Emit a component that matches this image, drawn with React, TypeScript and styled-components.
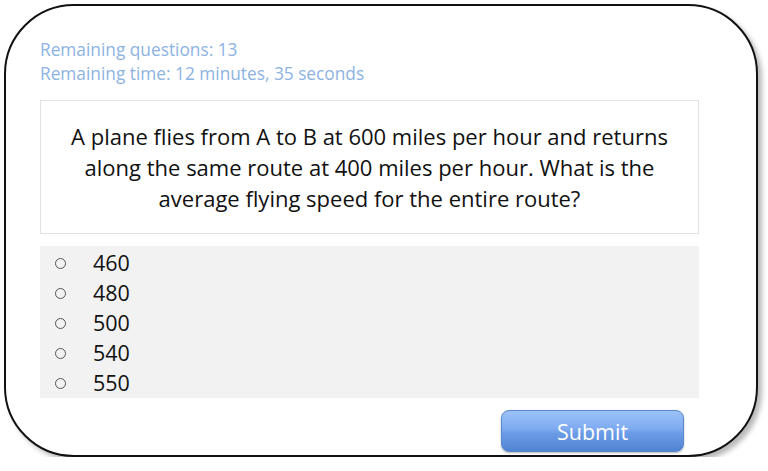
import React from "react";
import styled, { createGlobalStyle } from "styled-components";

const GlobalStyle = createGlobalStyle`
  html, body {
    margin: 0;
    padding: 0;
    background: #fff;
  }
  body {
    font-family: "Open Sans", "Noto Sans", sans-serif;
  }
`;

const Frame = styled.div`
  box-sizing: border-box;
  width: 754px;
  height: 453px;
  margin: 4px 0 0 4px;
  border: 2px solid #111;
  border-radius: 70px;
  background: #fff;
  box-shadow: 4px 4px 5px rgba(0, 0, 0, 0.28);
  padding: 32px 0 0 34px;
  display: flex;
  flex-direction: column;
`;

const Content = styled.div`
  width: 659px;
  display: flex;
  flex-direction: column;
`;

const Status = styled.div`
  color: #8db3e2;
  font-size: 17.3px;
  line-height: 24px;
  margin-bottom: 14px;
`;

const Question = styled.div`
  box-sizing: border-box;
  height: 134px;
  border: 1px solid #e2e2e2;
  background: #fff;
  padding: 20px 20px 0;
  text-align: center;
  color: #111;
  font-size: 22px;
  line-height: 31px;
  margin-bottom: 12px;
`;

const Options = styled.ul`
  list-style: none;
  margin: 0;
  padding: 1px 0 0;
  height: 152px;
  box-sizing: border-box;
  background: #f2f2f2;
`;

const Option = styled.li`
  display: flex;
  align-items: center;
  height: 30px;
  font-size: 21.5px;
  color: #111;
`;

const Radio = styled.span`
  box-sizing: border-box;
  width: 11px;
  height: 11px;
  border: 1.4px solid #555;
  border-radius: 50%;
  margin: 2px 27px 0 15px;
`;

const Footer = styled.div`
  display: flex;
  justify-content: flex-end;
  padding-right: 15px;
  margin-top: 12px;
`;

const SubmitButton = styled.button`
  box-sizing: border-box;
  width: 183px;
  height: 42px;
  border: 1px solid #5a88cc;
  border-radius: 8px;
  background: linear-gradient(#9cc2f7 0%, #7eaaf0 45%, #6c9ce6 55%, #4f84d3 100%);
  box-shadow: 0 1px 2px rgba(0, 0, 0, 0.3);
  color: #fff;
  font-family: "Open Sans", "Noto Sans", sans-serif;
  font-size: 21.5px;
  padding: 0;
  cursor: pointer;
`;

const answers = ["460", "480", "500", "540", "550"];

export default function App() {
  return (
    <>
      <GlobalStyle />
      <Frame>
        <Content>
          <Status>
            Remaining questions: 13
            <br />
            Remaining time: 12 minutes, 35 seconds
          </Status>
          <Question>
            A plane flies from A to B at 600 miles per hour and returns along
            the same route at 400 miles per hour. What is the average flying
            speed for the entire route?
          </Question>
          <Options>
            {answers.map((a) => (
              <Option key={a}>
                <Radio />
                {a}
              </Option>
            ))}
          </Options>
          <Footer>
            <SubmitButton>Submit</SubmitButton>
          </Footer>
        </Content>
      </Frame>
    </>
  );
}
